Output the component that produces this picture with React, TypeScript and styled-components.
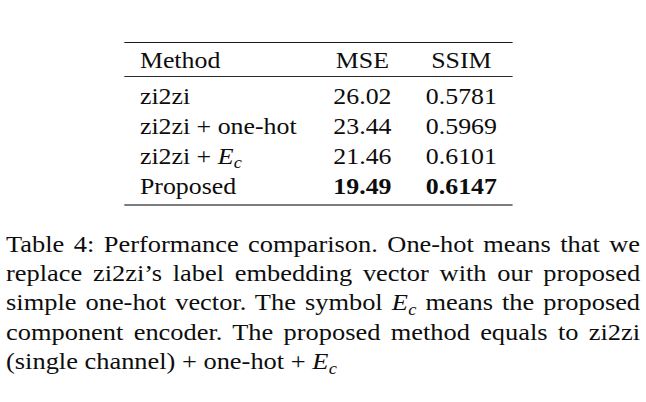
import React from "react";
import styled, { createGlobalStyle } from "styled-components";

const GlobalStyle = createGlobalStyle`
  html, body {
    margin: 0;
    padding: 0;
    background: #ffffff;
  }
  body {
    font-family: "Liberation Serif", "Times New Roman", serif;
    color: #0d0d0d;
  }
`;

/* The source figure is rendered slightly wider than it is tall, so the
   whole figure is stretched horizontally; layout values below are in
   unstretched units (pixel / 1.1). */
const Figure = styled.div`
  display: flex;
  flex-direction: column;
  align-items: flex-start;
  padding-top: 42px;
  width: 587px;
  height: 402px;
  box-sizing: border-box;
  transform: scaleX(1.1);
  transform-origin: 0 0;
`;

const Table = styled.div`
  margin-left: 112.7px;
  width: 353.6px;
  border-top: 1px solid #1a1a1a;
  border-bottom: 2px solid #7c7c7c;
  font-size: 23.5px;
`;

const Row = styled.div<{ $head?: boolean; $first?: boolean; $last?: boolean }>`
  display: grid;
  grid-template-columns: 173.6px 86.4px 93.6px;
  line-height: ${(p) => (p.$head ? "29.7px" : "30px")};
  padding-top: ${(p) => (p.$head ? "3px" : p.$first ? "4px" : "0")};
  padding-bottom: ${(p) => (p.$last ? "3px" : "0")};
  border-bottom: ${(p) => (p.$head ? "1px solid #2a2a2a" : "none")};
`;

const Cell = styled.div<{ $align?: "left" | "center"; $bold?: boolean }>`
  text-align: ${(p) => p.$align ?? "center"};
  padding-left: ${(p) => (p.$align === "left" ? "14.5px" : "0")};
  font-weight: ${(p) => (p.$bold ? 700 : 400)};
  white-space: nowrap;
`;

const Caption = styled.div`
  margin-left: 5.5px;
  margin-top: 24px;
  width: 576.4px;
  font-size: 24px;
  line-height: 29.3px;
`;

const Line = styled.div<{ $last?: boolean }>`
  text-align: justify;
  text-align-last: ${(p) => (p.$last ? "left" : "justify")};
  white-space: nowrap;
`;

const MathE = styled.span`
  font-style: italic;
  white-space: nowrap;
`;

const Sub = styled.span`
  font-size: 0.7em;
  font-style: italic;
  vertical-align: -0.28em;
  line-height: 0;
  margin-left: 0.02em;
`;

const Ec = () => (
  <MathE>
    E<Sub>c</Sub>
  </MathE>
);

type RowData = { method: React.ReactNode; mse: string; ssim: string; best?: boolean };

const rows: RowData[] = [
  { method: "zi2zi", mse: "26.02", ssim: "0.5781" },
  { method: "zi2zi + one-hot", mse: "23.44", ssim: "0.5969" },
  {
    method: (
      <>
        zi2zi + <Ec />
      </>
    ),
    mse: "21.46",
    ssim: "0.6101",
  },
  { method: "Proposed", mse: "19.49", ssim: "0.6147", best: true },
];

export default function App() {
  return (
    <>
      <GlobalStyle />
      <Figure>
        <Table>
          <Row $head>
            <Cell $align="left">Method</Cell>
            <Cell>MSE</Cell>
            <Cell>SSIM</Cell>
          </Row>
          {rows.map((r, i) => (
            <Row key={i} $first={i === 0} $last={i === rows.length - 1}>
              <Cell $align="left">{r.method}</Cell>
              <Cell $bold={r.best}>{r.mse}</Cell>
              <Cell $bold={r.best}>{r.ssim}</Cell>
            </Row>
          ))}
        </Table>
        <Caption>
          <Line>Table 4: Performance comparison. One-hot means that we</Line>
          <Line>replace zi2zi’s label embedding vector with our proposed</Line>
          <Line>
            simple one-hot vector. The symbol <Ec /> means the proposed
          </Line>
          <Line>component encoder. The proposed method equals to zi2zi</Line>
          <Line $last>
            (single channel) + one-hot + <Ec />
          </Line>
        </Caption>
      </Figure>
    </>
  );
}
